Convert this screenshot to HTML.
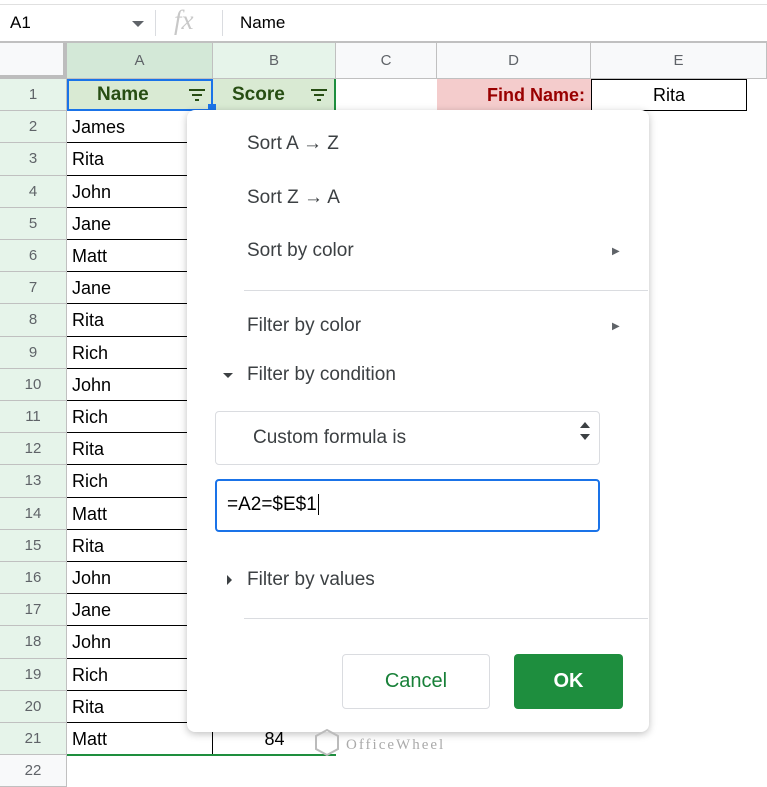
<!DOCTYPE html><html><head><style>
*{margin:0;padding:0;box-sizing:border-box}
body{width:767px;height:784px;overflow:hidden;background:#fff;font-family:"Liberation Sans",Arial,sans-serif;position:relative}
.a{position:absolute}
.rh{position:absolute;left:0;width:67px;background:#f8f9fa;border-bottom:1px solid #c0c0c0;border-right:1px solid #c0c0c0;color:#5f6368;font-size:15px;text-align:center}
.rh.s{background:#e6f4ea}
.cell{position:absolute;font-size:18px;color:#000;padding-left:5px}
.ch{position:absolute;top:43px;height:36px;line-height:36px;text-align:center;color:#5f6368;font-size:15px;border-right:1px solid #c0c0c0;border-bottom:1px solid #c0c0c0;background:#f8f9fa}
.mi{position:absolute;left:247px;font-size:19px;color:#3c4043}
.arr{position:absolute;left:612px;font-size:10px;color:#5f6368}
</style></head><body>
<div class="a" style="left:0;top:0;width:767px;height:5px;border-bottom:1px solid #e0e0e0"></div>
<div class="a" style="left:10px;top:13px;font-size:17px;color:#000">A1</div>
<div class="a" style="left:132px;top:21px;width:0;height:0;border-left:6px solid transparent;border-right:6px solid transparent;border-top:6px solid #5f6368"></div>
<div class="a" style="left:155px;top:10px;width:1px;height:26px;background:#dadce0"></div>
<div class="a" style="left:174px;top:5px;font-size:27px;color:#c8c8c8;font-family:'Liberation Serif',serif;font-style:italic">fx</div>
<div class="a" style="left:222px;top:10px;width:1px;height:26px;background:#dadce0"></div>
<div class="a" style="left:240px;top:13px;font-size:17px;color:#000">Name</div>
<div class="a" style="left:0;top:41px;width:767px;height:2px;background:#c0c0c0"></div>
<div class="ch" style="left:0;width:67px;border-right:4px solid #bdbdbd;border-bottom:4px solid #bdbdbd"></div>
<div class="ch" style="left:67px;width:146px;background:#d3e8d7">A</div>
<div class="ch" style="left:213px;width:123px;background:#e6f4ea">B</div>
<div class="ch" style="left:336px;width:101px">C</div>
<div class="ch" style="left:437px;width:154px">D</div>
<div class="ch" style="left:591px;width:176px">E</div>
<div id="rows"></div>
<div class="a" style="left:67px;top:79px;width:146px;height:32px;background:#d9ead3;border:2px solid #1a73e8"></div>
<div class="a" style="left:97px;top:84px;font-size:19px;font-weight:bold;color:#274e13">Name</div>
<div class="a" style="left:213px;top:79px;width:123px;height:32px;background:#d9ead3;border-right:2px solid #1e8e3e"></div>
<div class="a" style="left:232px;top:84px;font-size:19px;font-weight:bold;color:#274e13">Score</div>
<svg class="a" style="left:187px;top:88px" width="20" height="14"><path d="M2 2h16M5 7h10M8 12h4" stroke="#274e13" stroke-width="2"/></svg>
<svg class="a" style="left:309px;top:88px" width="20" height="14"><path d="M2 2h16M5 7h10M8 12h4" stroke="#274e13" stroke-width="2"/></svg>
<div class="a" style="left:208px;top:104px;width:8px;height:6px;background:#1a73e8"></div>
<div class="a" style="left:437px;top:79px;width:154px;height:32px;background:#f4cccc;border-bottom:1px solid #000;text-align:right;padding-right:6px;font-size:18px;font-weight:bold;color:#990000;line-height:32px">Find Name:</div>
<div class="a" style="left:591px;top:79px;width:156px;height:32px;border:1px solid #000;text-align:center;font-size:18px;line-height:30px">Rita</div>
<div class="a" style="left:187px;top:110px;width:462px;height:622px;background:#fff;border-radius:8px;box-shadow:0 2px 8px rgba(0,0,0,.25)"></div>
<div class="mi" style="top:133px">Sort A → Z</div>
<div class="mi" style="top:187px">Sort Z → A</div>
<div class="mi" style="top:240px">Sort by color</div>
<div class="arr" style="top:246px">▶</div>
<div class="a" style="left:244px;top:290px;width:404px;height:1px;background:#dadce0"></div>
<div class="mi" style="top:315px">Filter by color</div>
<div class="arr" style="top:321px">▶</div>
<div class="a" style="left:223px;top:373px;width:0;height:0;border-left:5px solid transparent;border-right:5px solid transparent;border-top:5px solid #3c4043"></div>
<div class="mi" style="top:364px">Filter by condition</div>
<div class="a" style="left:215px;top:411px;width:385px;height:54px;border:1px solid #dadce0;border-radius:4px"></div>
<div class="a" style="left:253px;top:427px;font-size:19px;color:#3c4043">Custom formula is</div>
<div class="a" style="left:580px;top:422px;width:0;height:0;border-left:5px solid transparent;border-right:5px solid transparent;border-bottom:6px solid #3c4043"></div>
<div class="a" style="left:580px;top:434px;width:0;height:0;border-left:5px solid transparent;border-right:5px solid transparent;border-top:6px solid #3c4043"></div>
<div class="a" style="left:215px;top:479px;width:385px;height:53px;border:2px solid #1a73e8;border-radius:4px"></div>
<div class="a" style="left:227px;top:494px;font-size:19px;color:#000">=A2=$E$1<span style="border-left:1px solid #000;margin-left:1px"></span></div>
<div class="a" style="left:227px;top:575px;width:0;height:0;border-top:5px solid transparent;border-bottom:5px solid transparent;border-left:5px solid #3c4043"></div>
<div class="mi" style="top:569px">Filter by values</div>
<div class="a" style="left:244px;top:618px;width:404px;height:1px;background:#dadce0"></div>
<div class="a" style="left:342px;top:654px;width:148px;height:55px;border:1px solid #dadce0;border-radius:4px;text-align:center;line-height:53px;font-size:20px;color:#188038">Cancel</div>
<div class="a" style="left:514px;top:654px;width:109px;height:55px;background:#1e8e3e;border-radius:4px;text-align:center;line-height:55px;font-size:20px;font-weight:bold;color:#fff">OK</div>
<div class="a" style="left:346px;top:737px;font-size:15px;letter-spacing:2px;color:#aaa;font-family:'Liberation Serif',serif">OfficeWheel</div>
<svg class="a" style="left:313px;top:728px" width="28" height="30"><path d="M14 2l11 6v13l-11 6-11-6V8z" fill="none" stroke="#bbb" stroke-width="2"/></svg>
<script>
var n=["James","Rita","John","Jane","Matt","Jane","Rita","Rich","John","Rich","Rita","Rich","Matt","Rita","John","Jane","John","Rich","Rita","Matt"];
var h="";
for(var i=1;i<=22;i++){var t=79+(i-1)*32.2;
h+='<div class="rh'+(i<=21?' s':'')+'" style="top:'+t+'px;height:32.2px;line-height:32px">'+i+'</div>';
if(i>=2&&i<=21){h+='<div class="cell" style="left:67px;top:'+t+'px;width:146px;height:32.2px;line-height:32px;border-bottom:1px solid #000;border-right:1px solid #000">'+n[i-2]+'</div>';}
}
h+='<div class="cell" style="left:213px;top:'+(79+20*32.2)+'px;width:123px;height:32.2px;line-height:32px;text-align:center;padding:0">84</div>';
h+='<div class="a" style="left:67px;top:'+(79+21*32.2-1)+'px;width:269px;height:2px;background:#1e8e3e"></div>';
document.getElementById("rows").innerHTML=h;
</script>
</body></html>
